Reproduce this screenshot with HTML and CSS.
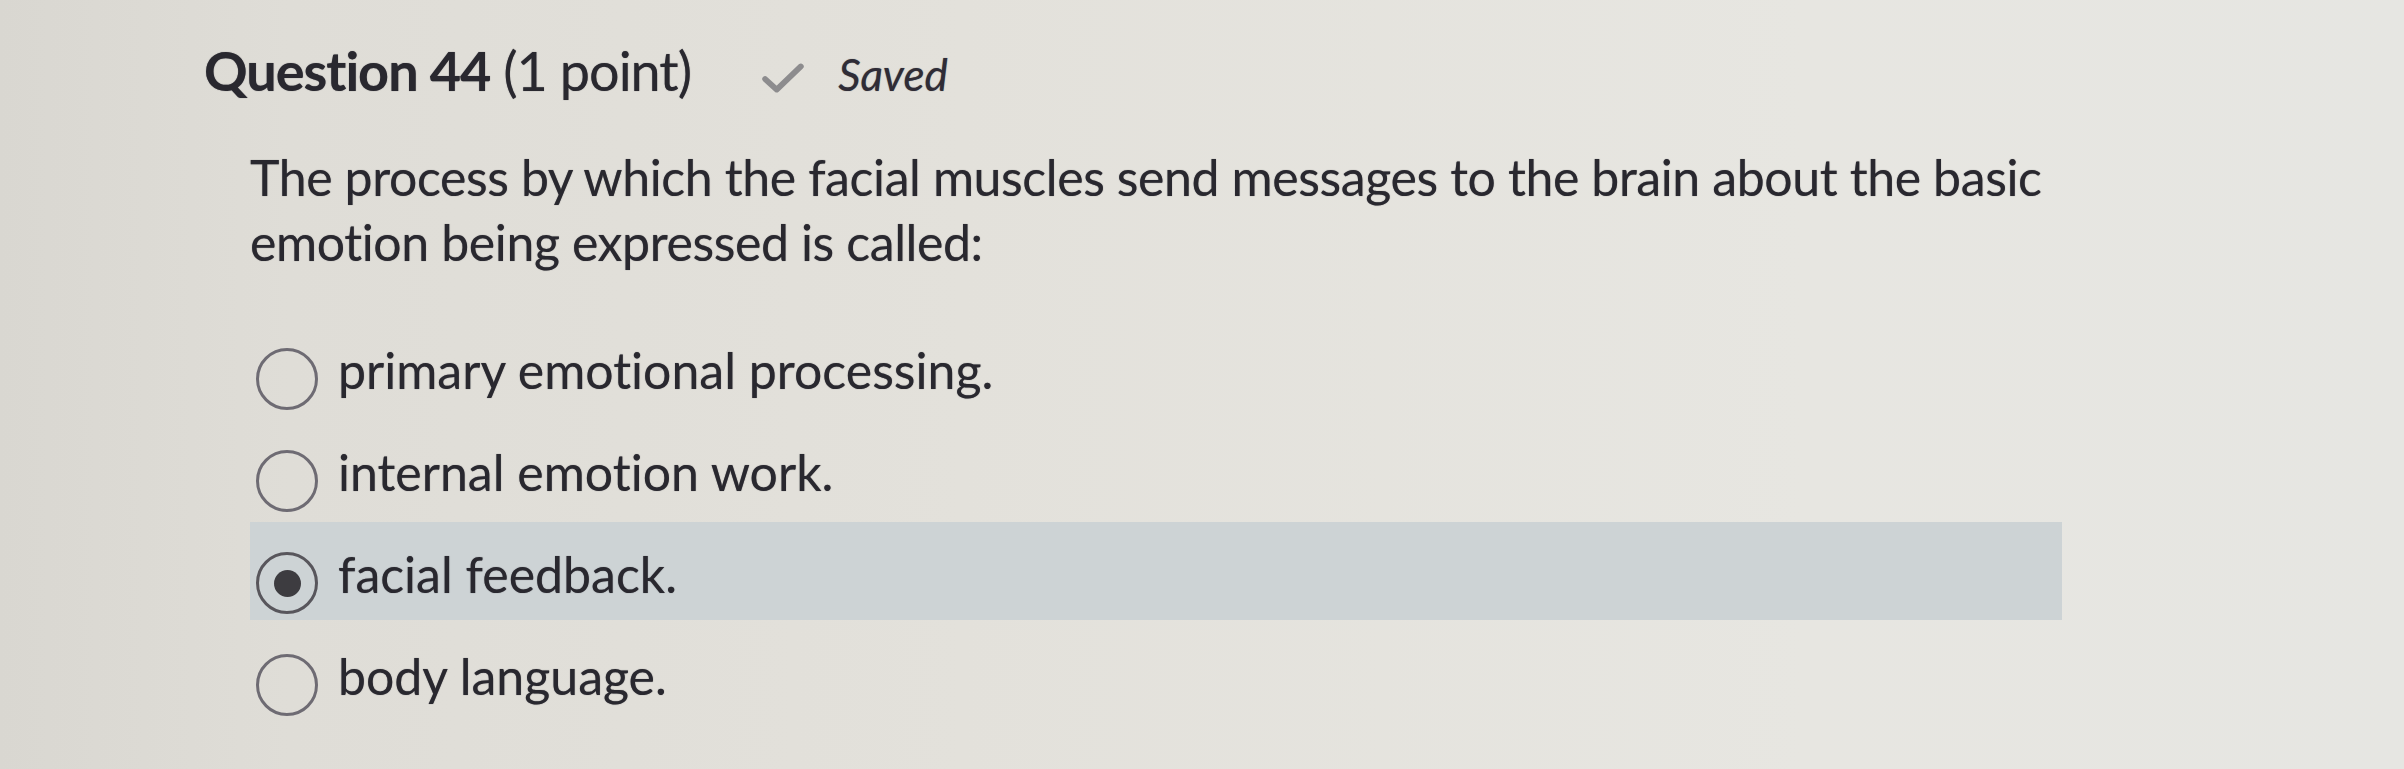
FILE: index.html
```html
<!DOCTYPE html>
<html lang="en">
<head>
<meta charset="utf-8">
<title>Question 44</title>
<link rel="stylesheet" href="styles.css">
</head>
<body>
<main class="page">
  <header class="q-header">
    <h2 class="q-title"><strong>Question 44</strong> <span class="q-points">(1 point)</span></h2>
    <span class="q-status">
      <svg class="check" viewBox="0 0 40 28" aria-hidden="true"><path d="M3 15 L14 25 L37 3" fill="none" stroke="#8d8c8e" stroke-width="5.5" stroke-linecap="round" stroke-linejoin="round"/></svg>
      <em class="saved">Saved</em>
    </span>
  </header>
  <p class="q-text">The process by which the facial muscles send messages to the brain about the basic emotion being expressed is called:</p>
  <ul class="options">
    <li class="option"><span class="radio"></span><span class="label">primary emotional processing.</span></li>
    <li class="option"><span class="radio"></span><span class="label">internal emotion work.</span></li>
    <li class="option selected"><span class="radio checked"></span><span class="label">facial feedback.</span></li>
    <li class="option"><span class="radio"></span><span class="label">body language.</span></li>
  </ul>
</main>
</body>
</html>
```

FILE: styles.css
```css
html, body {
  margin: 0;
  padding: 0;
  height: 100%;
}
body {
  background: linear-gradient(90deg, #d9d7d1 0%, #dfddd7 12%, #e3e1db 40%, #e7e6e1 75%, #e6e6e2 100%);
  font-family: Lato, "Open Sans", sans-serif;
  font-variant-ligatures: none;
  color: #29282f;
  overflow: hidden;
}
.page {
  padding: 37px 0 0 204px;
  width: 1858px;
}
.q-header {
  display: flex;
  align-items: baseline;
}
.q-title {
  margin: 0;
  font-size: 54px;
  line-height: 67px;
  font-weight: 400;
  letter-spacing: -1px;
  text-shadow: 0 0 1px rgba(40, 38, 46, 0.6);
}
.q-title strong {
  font-weight: 700;
}
.q-status {
  display: flex;
  align-items: baseline;
  margin-left: 71px;
}
.check {
  width: 42px;
  height: 30px;
  margin-right: 34px;
  position: relative;
  top: 2px;
}
.saved {
  font-size: 44px;
  font-style: italic;
  color: #2f2c36;
  text-shadow: 0 0 1px rgba(40, 38, 46, 0.6);
}
.q-text {
  margin: 41px 0 0 46px;
  font-size: 50px;
  line-height: 65px;
  width: 1840px;
  letter-spacing: -0.4px;
  text-shadow: 0 0 1px rgba(40, 38, 46, 0.6);
}
.options {
  list-style: none;
  margin: 43px 0 0 46px;
  padding: 0;
  width: 1812px;
}
.option {
  display: flex;
  align-items: flex-start;
  height: 98px;
  margin-bottom: 4px;
}
.option.selected {
  background: #cdd3d5;
}
.radio {
  box-sizing: border-box;
  width: 62px;
  height: 62px;
  margin: 30px 20px 0 6px;
  border: 3px solid #6e6b73;
  border-radius: 50%;
  display: flex;
  align-items: center;
  justify-content: center;
  flex: none;
}
.radio.checked {
  border-color: #58565c;
}
.radio.checked::after {
  content: "";
  width: 27px;
  height: 27px;
  border-radius: 50%;
  background: #3d3c40;
}
.label {
  font-size: 50px;
  line-height: 60px;
  margin-top: 22px;
  text-shadow: 0 0 1px rgba(40, 38, 46, 0.6);
}
```
